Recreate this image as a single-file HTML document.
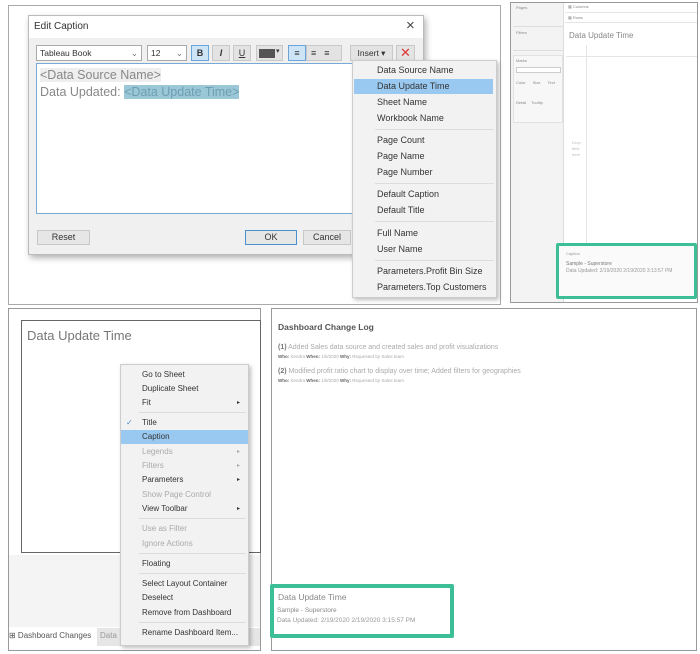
<!DOCTYPE html>
<html><head><style>
*{margin:0;padding:0;box-sizing:border-box}
body{width:700px;height:654px;background:#fff;position:relative;overflow:hidden;font-family:"Liberation Sans",sans-serif;color:#333}
.a{position:absolute}
.t{position:absolute;white-space:nowrap}
.btn{position:absolute;background:#e6e6e6;border:1px solid #c8c8c8;font-size:9px;text-align:center;line-height:13px}
.mi{position:absolute;left:0;right:0;height:15px;line-height:15px;font-size:9px;padding-left:24px;white-space:nowrap}
.sep{position:absolute;left:22px;right:2px;border-top:1px solid #ddd}
.cm{position:absolute;left:0;right:0;height:14px;line-height:14px;font-size:8px;padding-left:21px;white-space:nowrap}
.g{color:#aaa}
.ar{position:absolute;right:8px;font-size:6px}
</style></head><body>
<!-- panel1 -->
<div class="a" style="left:8px;top:5px;width:493px;height:300px;border:1px solid #aaa"></div>
<div class="a" style="left:28px;top:15px;width:396px;height:240px;background:#f0f0f0;border:1px solid #bbb;box-shadow:2px 3px 6px rgba(0,0,0,.3)"></div>
<div class="a" style="left:29px;top:16px;width:394px;height:22px;background:#fff"></div>
<div class="t" style="left:34px;top:21px;font-size:10px">Edit Caption</div>
<div class="t" style="left:406px;top:17px;font-size:15px;color:#444">×</div>
<div class="a" style="left:36px;top:45px;width:106px;height:16px;background:#fff;border:1px solid #aaa;font-size:8.5px;padding:2px 3px">Tableau Book<span style="float:right;color:#777">⌄</span></div>
<div class="a" style="left:147px;top:45px;width:40px;height:16px;background:#fff;border:1px solid #aaa;font-size:8.5px;padding:2px 3px">12<span style="float:right;color:#777">⌄</span></div>
<div class="a" style="left:191px;top:45px;width:18px;height:16px;background:#cde4f7;border:1px solid #6aa6d9;font-size:9px;font-weight:bold;text-align:center;line-height:14px">B</div>
<div class="a" style="left:212px;top:45px;width:18px;height:16px;background:#e3e3e3;border:1px solid #c8c8c8;font-size:9px;font-style:italic;font-weight:bold;text-align:center;line-height:14px">I</div>
<div class="a" style="left:233px;top:45px;width:18px;height:16px;background:#e3e3e3;border:1px solid #c8c8c8;font-size:9px;text-decoration:underline;text-align:center;line-height:14px">U</div>
<div class="a" style="left:256px;top:45px;width:27px;height:16px;background:#e3e3e3;border:1px solid #c8c8c8"><div class="a" style="left:2px;top:3px;width:16px;height:9px;background:#555"></div><div class="t" style="left:19px;top:1px;font-size:7px">▾</div></div>
<div class="a" style="left:288px;top:45px;width:18px;height:16px;background:#cde4f7;border:1px solid #6aa6d9;font-size:9px;text-align:center;line-height:14px">≡</div>
<div class="a" style="left:306px;top:45px;width:36px;height:16px;background:#e3e3e3;border:1px solid #c8c8c8;font-size:9px;line-height:14px;letter-spacing:8px;padding-left:4px">≡≡</div>
<div class="a" style="left:350px;top:45px;width:43px;height:16px;background:#e3e3e3;border:1px solid #c8c8c8;font-size:8.5px;text-align:center;line-height:14px">Insert ▾</div>
<div class="a" style="left:396px;top:45px;width:19px;height:16px;background:#e3e3e3;border:1px solid #c8c8c8;color:#d33;font-size:13px;text-align:center;line-height:14px">✕</div>
<div class="a" style="left:36px;top:63px;width:320px;height:151px;background:#fff;border:1px solid #7aa9d6"></div>
<div class="t" style="left:40px;top:68px;font-size:12.5px;color:#888"><span style="background:#eee">&lt;Data Source Name&gt;</span></div>
<div class="t" style="left:40px;top:85px;font-size:12.5px;color:#888">Data Updated: <span style="background:#9cc7d6;color:#6a9fb2">&lt;Data Update Time&gt;</span></div>
<div class="btn" style="left:37px;top:230px;width:53px;height:15px">Reset</div>
<div class="btn" style="left:245px;top:230px;width:52px;height:15px;border:1px solid #4a8fd0">OK</div>
<div class="btn" style="left:303px;top:230px;width:48px;height:15px">Cancel</div>
<div class="a" style="left:352px;top:60px;width:145px;height:238px;background:#f2f2f2;border:1px solid #ccc;box-shadow:2px 2px 4px rgba(0,0,0,.25)">
<div class="mi" style="top:2px">Data Source Name</div>
<div class="mi" style="top:18px;background:#99c9f0;left:1px;right:3px;padding-left:23px">Data Update Time</div>
<div class="mi" style="top:34px">Sheet Name</div>
<div class="mi" style="top:50px">Workbook Name</div>
<div class="sep" style="top:68px"></div>
<div class="mi" style="top:72px">Page Count</div>
<div class="mi" style="top:88px">Page Name</div>
<div class="mi" style="top:104px">Page Number</div>
<div class="sep" style="top:122px"></div>
<div class="mi" style="top:126px">Default Caption</div>
<div class="mi" style="top:142px">Default Title</div>
<div class="sep" style="top:160px"></div>
<div class="mi" style="top:165px">Full Name</div>
<div class="mi" style="top:181px">User Name</div>
<div class="sep" style="top:199px"></div>
<div class="mi" style="top:203px">Parameters.Profit Bin Size</div>
<div class="mi" style="top:219px">Parameters.Top Customers</div>
</div>
<!-- panel2 -->
<div class="a" style="left:510px;top:2px;width:188px;height:301px;border:1px solid #999;background:#fff"></div>
<div class="a" style="left:511px;top:3px;width:53px;height:299px;background:#f3f3f3;border-right:1px solid #ddd"></div>
<div class="a" style="left:513px;top:26px;width:50px;height:25px;border-top:1px solid #ddd;border-bottom:1px solid #ddd"></div>
<div class="a" style="left:513px;top:55px;width:50px;height:68px;border:1px solid #e2e2e2;background:#f7f7f7"></div>
<div class="t" style="left:516px;top:5px;font-size:4px;color:#888">Pages</div>
<div class="t" style="left:516px;top:30px;font-size:4px;color:#888">Filters</div>
<div class="t" style="left:516px;top:58px;font-size:4px;color:#888">Marks</div>
<div class="a" style="left:516px;top:67px;width:45px;height:6px;border:1px solid #ccc;background:#fff"></div>
<div class="t" style="left:516px;top:80px;font-size:4px;color:#888;word-spacing:6px">Color Size Text</div>
<div class="t" style="left:516px;top:100px;font-size:4px;color:#888;word-spacing:4px">Detail Tooltip</div>
<div class="a" style="left:565px;top:3px;width:132px;height:10px;border-bottom:1px solid #e5e5e5"></div>
<div class="a" style="left:565px;top:13px;width:132px;height:10px;border-bottom:1px solid #e5e5e5"></div>
<div class="t" style="left:568px;top:4px;font-size:4px;color:#888">▦ Columns</div>
<div class="t" style="left:568px;top:15px;font-size:4px;color:#888">▦ Rows</div>
<div class="t" style="left:569px;top:31px;font-size:8px;color:#888">Data Update Time</div>
<div class="a" style="left:566px;top:56px;width:131px;border-top:1px solid #e5e5e5"></div>
<div class="a" style="left:586px;top:45px;height:200px;border-left:1px solid #e5e5e5"></div>
<div class="t" style="left:572px;top:140px;font-size:4px;color:#bbb;line-height:6px">Drop<br>field<br>here</div>
<div class="a" style="left:556px;top:243px;width:141px;height:56px;border:3.5px solid #3cbf97;border-radius:2px;background:#fafafa"></div>
<div class="t" style="left:566px;top:251px;font-size:4px;color:#999">Caption</div>
<div class="t" style="left:566px;top:261px;font-size:5px;color:#777">Sample - Superstore</div>
<div class="t" style="left:566px;top:268px;font-size:5px;color:#999">Data Updated: 2/19/2020 2/19/2020 3:13:57 PM</div>
<!-- panel3 -->
<div class="a" style="left:8px;top:308px;width:253px;height:343px;border:1px solid #999;background:#fff"></div>
<div class="a" style="left:9px;top:555px;width:251px;height:72px;background:#f4f4f4"></div>
<div class="a" style="left:21px;top:320px;width:240px;height:233px;border:1px solid #666;background:#fff"></div>
<div class="t" style="left:27px;top:328px;font-size:13px;color:#777">Data Update Time</div>
<div class="a" style="left:9px;top:628px;width:251px;height:18px;background:#e6e6e6"></div>
<div class="a" style="left:9px;top:628px;width:88px;height:18px;background:#fff"></div>
<div class="t" style="left:9px;top:631px;font-size:8px;color:#555">⊞ Dashboard Changes</div>
<div class="t" style="left:100px;top:631px;font-size:8px;color:#999">Data</div>
<div class="a" style="left:120px;top:364px;width:129px;height:282px;background:#f2f2f2;border:1px solid #ccc;box-shadow:2px 2px 4px rgba(0,0,0,.25)">
<div class="cm" style="top:3px">Go to Sheet</div>
<div class="cm" style="top:17px">Duplicate Sheet</div>
<div class="cm" style="top:31px">Fit<span class="ar">▸</span></div>
<div class="sep" style="top:47px;left:18px"></div>
<div class="cm" style="top:51px"><span style="position:absolute;left:5px;color:#4a8fd0">✓</span>Title</div>
<div class="cm" style="top:65px;background:#99c9f0">Caption</div>
<div class="cm g" style="top:80px">Legends<span class="ar">▸</span></div>
<div class="cm g" style="top:94px">Filters<span class="ar">▸</span></div>
<div class="cm" style="top:108px">Parameters<span class="ar">▸</span></div>
<div class="cm g" style="top:123px">Show Page Control</div>
<div class="cm" style="top:137px">View Toolbar<span class="ar">▸</span></div>
<div class="sep" style="top:153px;left:18px"></div>
<div class="cm g" style="top:157px">Use as Filter</div>
<div class="cm g" style="top:172px">Ignore Actions</div>
<div class="sep" style="top:188px;left:18px"></div>
<div class="cm" style="top:192px">Floating</div>
<div class="sep" style="top:208px;left:18px"></div>
<div class="cm" style="top:212px">Select Layout Container</div>
<div class="cm" style="top:226px">Deselect</div>
<div class="cm" style="top:241px">Remove from Dashboard</div>
<div class="sep" style="top:257px;left:18px"></div>
<div class="cm" style="top:261px">Rename Dashboard Item...</div>
</div>
<!-- panel4 -->
<div class="a" style="left:271px;top:308px;width:426px;height:343px;border:1px solid #999"></div>
<div class="t" style="left:278px;top:322px;font-size:8.5px;color:#555;font-weight:bold">Dashboard Change Log</div>
<div class="t" style="left:278px;top:344px;font-size:7px;color:#aaa"><b style="color:#777">(1)</b> Added Sales data source and created sales and profit visualizations</div>
<div class="t" style="left:278px;top:354px;font-size:4.5px;color:#aaa"><b style="color:#666">Who:</b> Kendra <b style="color:#666">When:</b> 1/5/2020 <b style="color:#666">Why:</b> Requested by Sales team</div>
<div class="t" style="left:278px;top:368px;font-size:7px;color:#aaa"><b style="color:#777">(2)</b> Modified profit ratio chart to display over time; Added filters for geographies</div>
<div class="t" style="left:278px;top:378px;font-size:4.5px;color:#aaa"><b style="color:#666">Who:</b> Kendra <b style="color:#666">When:</b> 1/8/2020 <b style="color:#666">Why:</b> Requested by Sales team</div>
<div class="a" style="left:270px;top:584px;width:184px;height:54px;border:4px solid #3cbf97;border-radius:2px;background:#fff"></div>
<div class="t" style="left:278px;top:592px;font-size:8.5px;color:#888">Data Update Time</div>
<div class="t" style="left:277px;top:607px;font-size:6.5px;color:#888">Sample - Superstore</div>
<div class="t" style="left:277px;top:617px;font-size:6.5px;color:#999">Data Updated: 2/19/2020 2/19/2020 3:15:57 PM</div>
</body></html>
